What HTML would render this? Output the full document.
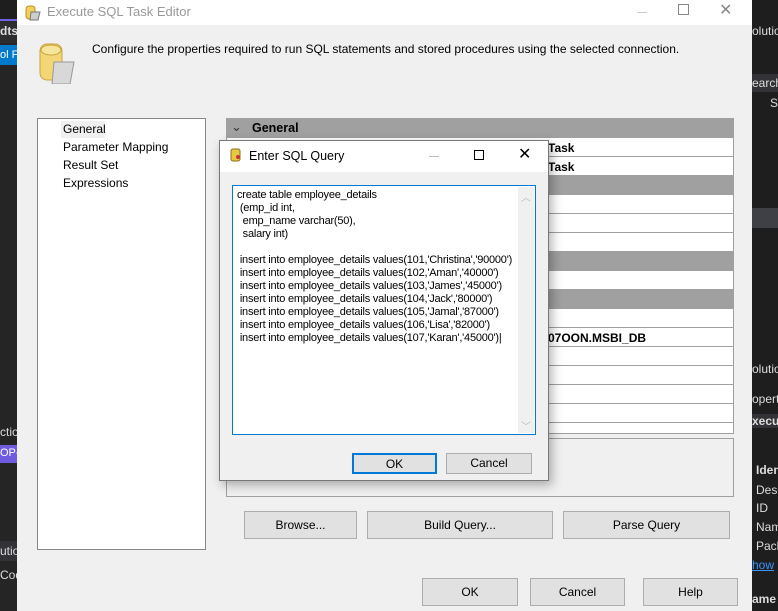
<!DOCTYPE html>
<html><head><meta charset="utf-8"><style>
*{box-sizing:border-box;margin:0;padding:0}
body{width:778px;height:611px;overflow:hidden;background:#1e1e1e;font-family:"Liberation Sans",sans-serif;font-size:12px;color:#000;position:relative}
.a{position:absolute}
.btn{position:absolute;background:#e1e1e1;border:1px solid #adadad;text-align:center;font-size:12px}
.row{position:absolute;left:226px;width:508px;height:19px;background:#fff;border-bottom:1px solid #a0a0a0}
.g{background:#a0a0a0}
.dk{position:absolute;color:#ddd;font-size:12px;white-space:nowrap;overflow:hidden}
</style></head><body>
<div class="a" style="left:0;top:25px;width:17px;height:586px;background:#252526"></div>
<div class="a" style="left:0;top:19px;width:17px;height:24px;background:#2d2d30;border-top:2px solid #7160e8"></div>
<div class="dk" style="left:0;top:24px;width:17px;font-weight:bold">dts</div>
<div class="a" style="left:0;top:45px;width:17px;height:20px;background:#007acc"></div>
<div class="dk" style="left:0;top:49px;width:17px;color:#fff;font-size:11px">ol Fl</div>
<div class="dk" style="left:0;top:425px;width:17px">ctio</div>
<div class="a" style="left:0;top:445px;width:17px;height:18px;background:#6f5be0"></div>
<div class="dk" style="left:0;top:447px;width:17px;color:#fff;font-size:11px">OP-</div>
<div class="a" style="left:0;top:541px;width:17px;height:20px;background:#333337"></div>
<div class="dk" style="left:0;top:544px;width:17px">utio</div>
<div class="dk" style="left:0;top:568px;width:17px">Cod</div>
<div class="a" style="left:752px;top:0;width:26px;height:611px;background:#1e1e1e"></div>
<div class="dk" style="left:752px;top:24px;width:26px">olutio</div>
<div class="dk" style="left:752px;top:74px;width:26px;background:#333337;height:18px;padding-top:2px">earch</div>
<div class="dk" style="left:770px;top:96px;width:8px">S</div>
<div class="a" style="left:752px;top:208px;width:26px;height:20px;background:#3f3f46"></div>
<div class="dk" style="left:752px;top:362px;width:26px">olutio</div>
<div class="dk" style="left:752px;top:392px;width:26px">operti</div>
<div class="dk" style="left:752px;top:414px;width:26px;font-weight:bold;background:#333337">xecut</div>
<div class="dk" style="left:756px;top:463px;width:22px;font-weight:bold">Iden</div>
<div class="dk" style="left:756px;top:483px;width:22px">Desc</div>
<div class="dk" style="left:756px;top:501px;width:22px">ID</div>
<div class="dk" style="left:756px;top:520px;width:22px">Nam</div>
<div class="dk" style="left:756px;top:539px;width:22px">Pack</div>
<div class="dk" style="left:752px;top:558px;width:26px;color:#3794ff;text-decoration:underline">how</div>
<div class="dk" style="left:752px;top:592px;width:26px;font-weight:bold">ame</div>

<div class="a" style="left:17px;top:0;width:735px;height:611px;background:#f0f0f0"></div>
<div class="a" style="left:17px;top:0;width:735px;height:25px;background:#fff"></div>
<svg class="a" style="left:24px;top:4px" width="18" height="18"><rect x="2" y="2" width="9" height="13" rx="3" fill="#f0cf5a" stroke="#b8901e"/><path d="M7 8h9l-2 8H6z" fill="#ccc" stroke="#777"/></svg>
<div class="a" style="left:47px;top:4px;color:#999;font-size:13px">Execute SQL Task Editor</div>
<div class="a" style="left:637px;top:12px;width:10px;height:1px;background:#ccc"></div>
<div class="a" style="left:678px;top:4px;width:11px;height:11px;border:1px solid #888"></div>
<div class="a" style="left:719px;top:0px;color:#888;font-size:16px">✕</div>
<svg class="a" style="left:38px;top:42px" width="40" height="42"><rect x="2" y="2" width="22" height="36" rx="7" fill="#f3d777" stroke="#c9a23a"/><ellipse cx="13" cy="8" rx="10" ry="5" fill="#f8e59c" stroke="#c9a23a"/><path d="M16 20h20l-4 22H14z" fill="#d8d8d8" stroke="#999"/></svg>
<div class="a" style="left:92px;top:42px;font-size:12px">Configure the properties required to run SQL statements and stored procedures using the selected connection.</div>

<div class="a" style="left:37px;top:118px;width:169px;height:432px;background:#fff;border:1px solid #888"></div>
<div class="a" style="left:61px;top:121px;width:44px;height:17px;background:#f0f0f0"></div>
<div class="a" style="left:63px;top:122px">General</div>
<div class="a" style="left:63px;top:140px">Parameter Mapping</div>
<div class="a" style="left:63px;top:158px">Result Set</div>
<div class="a" style="left:63px;top:176px">Expressions</div>

<div class="row g" style="top:118px;height:20px"></div>
<div class="a" style="left:231px;top:119px;font-size:13px;color:#333">⌄</div>
<div class="a" style="left:252px;top:121px;font-weight:bold;font-size:12.5px">General</div>
<div class="row" style="top:138px"></div>
<div class="row" style="top:157px"></div>
<div class="row g" style="top:176px"></div>
<div class="row" style="top:195px"></div>
<div class="row" style="top:214px"></div>
<div class="row" style="top:233px"></div>
<div class="row g" style="top:252px"></div>
<div class="row" style="top:271px"></div>
<div class="row g" style="top:290px"></div>
<div class="row" style="top:309px"></div>
<div class="row" style="top:328px"></div>
<div class="row" style="top:347px"></div>
<div class="row" style="top:366px"></div>
<div class="row" style="top:385px"></div>
<div class="row" style="top:404px"></div>
<div class="row" style="top:423px;height:11px"></div>
<div class="a" style="left:226px;top:118px;width:508px;height:316px;border:1px solid #a0a0a0"></div>
<div class="a" style="left:548px;top:141px;font-weight:bold">Task</div>
<div class="a" style="left:548px;top:160px;font-weight:bold">Task</div>
<div class="a" style="left:548px;top:331px;font-weight:bold">07OON.MSBI_DB</div>
<div class="a" style="left:226px;top:438px;width:508px;height:59px;border:1px solid #a0a0a0"></div>

<div class="btn" style="left:244px;top:511px;width:113px;height:28px;line-height:26px">Browse...</div>
<div class="btn" style="left:367px;top:511px;width:186px;height:28px;line-height:26px">Build Query...</div>
<div class="btn" style="left:563px;top:511px;width:167px;height:28px;line-height:26px">Parse Query</div>
<div class="btn" style="left:422px;top:578px;width:96px;height:28px;line-height:26px">OK</div>
<div class="btn" style="left:530px;top:578px;width:95px;height:28px;line-height:26px">Cancel</div>
<div class="btn" style="left:643px;top:578px;width:95px;height:28px;line-height:26px">Help</div>

<div class="a" style="left:219px;top:140px;width:330px;height:341px;background:#f0f0f0;border:1px solid #777;box-shadow:3px 4px 10px rgba(0,0,0,.3)"></div>
<div class="a" style="left:220px;top:141px;width:328px;height:31px;background:#fff"></div>
<svg class="a" style="left:230px;top:148px" width="12" height="14"><rect x="1" y="1" width="9" height="12" rx="2" fill="#e8c840" stroke="#8a7020"/><circle cx="8" cy="9" r="2" fill="#c33"/></svg>
<div class="a" style="left:249px;top:149px;font-size:12.5px">Enter SQL Query</div>
<div class="a" style="left:429px;top:156px;width:10px;height:1px;background:#bbb"></div>
<div class="a" style="left:474px;top:150px;width:10px;height:10px;border:1px solid #000"></div>
<div class="a" style="left:518px;top:144px;font-size:16px">✕</div>
<div class="a" style="left:232px;top:185px;width:304px;height:250px;background:#fff;border:1px solid #0078d7"></div>
<div class="a" style="left:518px;top:187px;width:16px;height:246px;background:#f0f0f0"></div>
<div class="a" style="left:521px;top:189px;color:#bbb;font-size:10px">︿</div>
<div class="a" style="left:521px;top:418px;color:#bbb;font-size:10px">﹀</div>
<pre class="a" style="left:237px;top:189px;font-family:'Liberation Sans',sans-serif;font-size:11px;line-height:13px;letter-spacing:-0.22px">create table employee_details
 (emp_id int,
  emp_name varchar(50),
  salary int)

 insert into employee_details values(101,'Christina','90000')
 insert into employee_details values(102,'Aman','40000')
 insert into employee_details values(103,'James','45000')
 insert into employee_details values(104,'Jack','80000')
 insert into employee_details values(105,'Jamal','87000')
 insert into employee_details values(106,'Lisa','82000')
 insert into employee_details values(107,'Karan','45000')|</pre>
<div class="btn" style="left:352px;top:453px;width:85px;height:21px;line-height:18px;border:2px solid #0078d7">OK</div>
<div class="btn" style="left:446px;top:453px;width:86px;height:21px;line-height:19px">Cancel</div>
</body></html>
